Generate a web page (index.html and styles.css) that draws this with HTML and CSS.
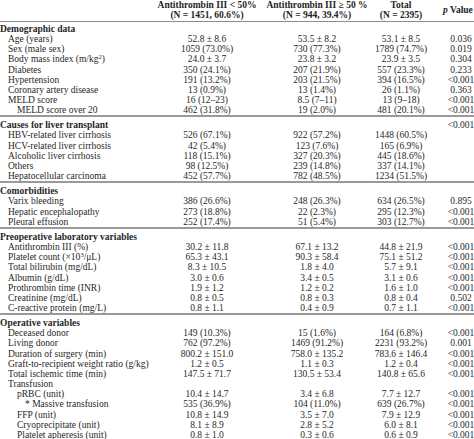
FILE: index.html
```html
<!DOCTYPE html>
<html>
<head>
<meta charset="utf-8">
<link rel="stylesheet" href="styles.css">
</head>
<body>
<table class="tbl">
<colgroup>
<col class="c1"><col class="c2"><col class="c3"><col class="c4"><col class="c5">
</colgroup>
<thead>
<tr>
<th></th>
<th>Antithrombin III &lt; 50%<br>(N = 1451, 60.6%)</th>
<th>Antithrombin III &ge; 50 %<br>(N = 944, 39.4%)</th>
<th>Total<br>(N = 2395)</th>
<th class="pv"><i>p</i> Value</th>
</tr>
</thead>
<tbody>
<tr class="sec first"><td class="h">Demographic data</td><td></td><td></td><td></td><td></td></tr>
<tr><td class="i1">Age (years)</td><td>52.8 ± 8.6</td><td>53.5 ± 8.2</td><td>53.1 ± 8.5</td><td>0.036</td></tr>
<tr><td class="i1">Sex (male sex)</td><td>1059 (73.0%)</td><td>730 (77.3%)</td><td>1789 (74.7%)</td><td>0.019</td></tr>
<tr><td class="i1">Body mass index (m/kg<sup>2</sup>)</td><td>24.0 ± 3.7</td><td>23.8 ± 3.2</td><td>23.9 ± 3.5</td><td>0.304</td></tr>
<tr><td class="i1">Diabetes</td><td>350 (24.1%)</td><td>207 (21.9%)</td><td>557 (23.3%)</td><td>0.233</td></tr>
<tr><td class="i1">Hypertension</td><td>191 (13.2%)</td><td>203 (21.5%)</td><td>394 (16.5%)</td><td>&lt;0.001</td></tr>
<tr><td class="i1">Coronary artery disease</td><td>13 (0.9%)</td><td>13 (1.4%)</td><td>26 (1.1%)</td><td>0.363</td></tr>
<tr><td class="i1">MELD score</td><td>16 (12–23)</td><td>8.5 (7–11)</td><td>13 (9–18)</td><td>&lt;0.001</td></tr>
<tr><td class="i2">MELD score over 20</td><td>462 (31.8%)</td><td>19 (2.0%)</td><td>481 (20.1%)</td><td>&lt;0.001</td></tr>

<tr class="sec"><td class="h">Causes for liver transplant</td><td></td><td></td><td></td><td>&lt;0.001</td></tr>
<tr><td class="i1">HBV-related liver cirrhosis</td><td>526 (67.1%)</td><td>922 (57.2%)</td><td>1448 (60.5%)</td><td></td></tr>
<tr><td class="i1">HCV-related liver cirrhosis</td><td>42 (5.4%)</td><td>123 (7.6%)</td><td>165 (6.9%)</td><td></td></tr>
<tr><td class="i1">Alcoholic liver cirrhosis</td><td>118 (15.1%)</td><td>327 (20.3%)</td><td>445 (18.6%)</td><td></td></tr>
<tr><td class="i1">Others</td><td>98 (12.5%)</td><td>239 (14.8%)</td><td>337 (14.1%)</td><td></td></tr>
<tr><td class="i1">Hepatocellular carcinoma</td><td>452 (57.7%)</td><td>782 (48.5%)</td><td>1234 (51.5%)</td><td></td></tr>

<tr class="sec"><td class="h">Comorbidities</td><td></td><td></td><td></td><td></td></tr>
<tr><td class="i1">Varix bleeding</td><td>386 (26.6%)</td><td>248 (26.3%)</td><td>634 (26.5%)</td><td>0.895</td></tr>
<tr><td class="i1">Hepatic encephalopathy</td><td>273 (18.8%)</td><td>22 (2.3%)</td><td>295 (12.3%)</td><td>&lt;0.001</td></tr>
<tr><td class="i1">Pleural effusion</td><td>252 (17.4%)</td><td>51 (5.4%)</td><td>303 (12.7%)</td><td>&lt;0.001</td></tr>

<tr class="sec"><td class="h">Preoperative laboratory variables</td><td></td><td></td><td></td><td></td></tr>
<tr><td class="i1">Antithrombin III (%)</td><td>30.2 ± 11.8</td><td>67.1 ± 13.2</td><td>44.8 ± 21.9</td><td>&lt;0.001</td></tr>
<tr><td class="i1">Platelet count (×10<sup>3</sup>/μL)</td><td>65.3 ± 43.1</td><td>90.3 ± 58.4</td><td>75.1 ± 51.2</td><td>&lt;0.001</td></tr>
<tr><td class="i1">Total bilirubin (mg/dL)</td><td>8.3 ± 10.5</td><td>1.8 ± 4.0</td><td>5.7 ± 9.1</td><td>&lt;0.001</td></tr>
<tr><td class="i1">Albumin (g/dL)</td><td>3.0 ± 0.6</td><td>3.4 ± 0.5</td><td>3.1 ± 0.6</td><td>&lt;0.001</td></tr>
<tr><td class="i1">Prothrombin time (INR)</td><td>1.9 ± 1.2</td><td>1.2 ± 0.2</td><td>1.6 ± 1.0</td><td>&lt;0.001</td></tr>
<tr><td class="i1">Creatinine (mg/dL)</td><td>0.8 ± 0.5</td><td>0.8 ± 0.3</td><td>0.8 ± 0.4</td><td>0.502</td></tr>
<tr><td class="i1">C-reactive protein (mg/L)</td><td>0.8 ± 1.1</td><td>0.4 ± 0.9</td><td>0.7 ± 1.1</td><td>&lt;0.001</td></tr>

<tr class="sec"><td class="h">Operative variables</td><td></td><td></td><td></td><td></td></tr>
<tr><td class="i1">Deceased donor</td><td>149 (10.3%)</td><td>15 (1.6%)</td><td>164 (6.8%)</td><td>&lt;0.001</td></tr>
<tr><td class="i1">Living donor</td><td>762 (97.2%)</td><td>1469 (91.2%)</td><td>2231 (93.2%)</td><td>0.001</td></tr>
<tr><td class="i1">Duration of surgery (min)</td><td>800.2 ± 151.0</td><td>758.0 ± 135.2</td><td>783.6 ± 146.4</td><td>&lt;0.001</td></tr>
<tr><td class="i1">Graft-to-recipient weight ratio (g/kg)</td><td>1.2 ± 0.5</td><td>1.1 ± 0.3</td><td>1.2 ± 0.4</td><td>&lt;0.001</td></tr>
<tr><td class="i1">Total ischemic time (min)</td><td>147.5 ± 71.7</td><td>130.5 ± 53.4</td><td>140.8 ± 65.6</td><td>&lt;0.001</td></tr>
<tr><td class="i1">Transfusion</td><td></td><td></td><td></td><td></td></tr>
<tr><td class="i2">pRBC (unit)</td><td>10.4 ± 14.7</td><td>3.4 ± 6.8</td><td>7.7 ± 12.7</td><td>&lt;0.001</td></tr>
<tr><td class="i3">* Massive transfusion</td><td>535 (36.9%)</td><td>104 (11.0%)</td><td>639 (26.7%)</td><td>&lt;0.001</td></tr>
<tr><td class="i2">FFP (unit)</td><td>10.8 ± 14.9</td><td>3.5 ± 7.0</td><td>7.9 ± 12.9</td><td>&lt;0.001</td></tr>
<tr><td class="i2">Cryoprecipitate (unit)</td><td>8.1 ± 8.9</td><td>2.8 ± 5.2</td><td>6.0 ± 8.1</td><td>&lt;0.001</td></tr>
<tr><td class="i2">Platelet apheresis (unit)</td><td>0.8 ± 1.0</td><td>0.3 ± 0.6</td><td>0.6 ± 0.9</td><td>&lt;0.001</td></tr>
</tbody>
</table>
</body>
</html>
```
FILE: styles.css
```css
html, body {
  margin: 0;
  padding: 0;
  background: #ffffff;
  overflow: hidden;
}
.tbl {
  border-collapse: separate;
  border-spacing: 0;
  table-layout: fixed;
  width: 490px;
  font-family: "Liberation Serif", "Times New Roman", serif;
  font-size: 9.5px;
  color: #1f1f1f;
}
.c1 { width: 150px; }
.c2 { width: 114px; }
.c3 { width: 106px; }
.c4 { width: 62px; }
.c5 { width: 58px; }
.tbl th {
  font-weight: bold;
  line-height: 10.15px;
  padding: 0 0 1px 0;
  text-align: center;
  vertical-align: middle;
  border-bottom: 1px solid #8c8c8c;
  white-space: nowrap;
}
.tbl th.pv {
  text-align: left;
  padding-left: 11px;
}
.tbl td {
  padding: 0;
  line-height: 10.15px;
  text-align: center;
  white-space: nowrap;
  vertical-align: middle;
}
.tbl td.h, .tbl td.i1, .tbl td.i2, .tbl td.i3 {
  text-align: left;
}
.tbl td.h { font-weight: bold; }
.tbl td.i1 { padding-left: 8px; }
.tbl td.i2 { padding-left: 17px; }
.tbl td.i3 { padding-left: 25px; }
.tbl tr.sec td {
  border-top: 2px solid #9a9a9a;
  padding-top: 3px;
}
.tbl tr.sec.first td {
  border-top: none;
  padding-top: 1.6px;
}
.tbl sup {
  font-size: 6.5px;
  line-height: 0;
  vertical-align: 3px;
}
```
